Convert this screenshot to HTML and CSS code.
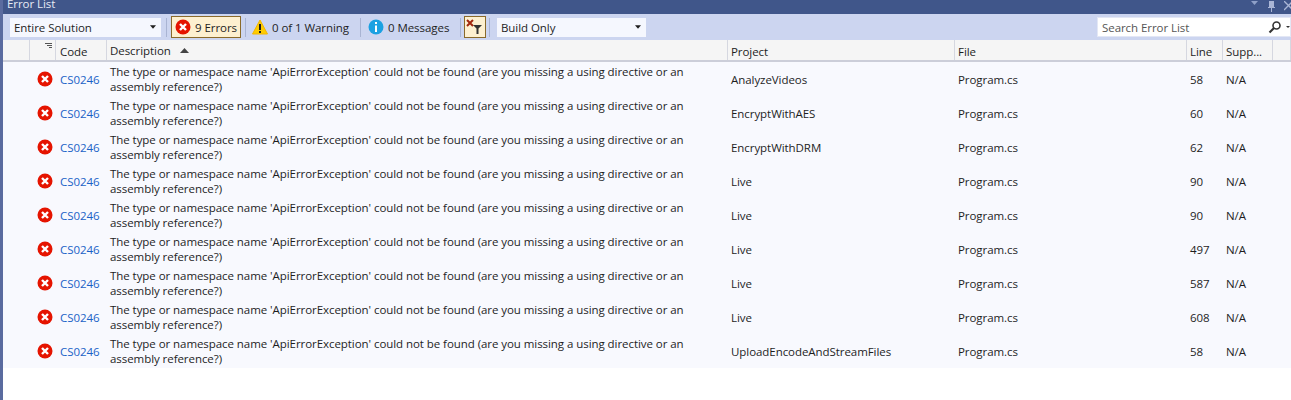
FILE: index.html
```html
<!DOCTYPE html>
<html lang="en">
<head>
<meta charset="utf-8">
<title>Error List</title>
<link rel="stylesheet" href="styles.css">
</head>
<body>
<svg class="defs" width="0" height="0" aria-hidden="true">
  <symbol id="err" viewBox="0 0 16 16">
    <circle cx="8" cy="8" r="7.5" fill="#e51400"/>
    <path d="M5 5l6 6M11 5l-6 6" stroke="#fff" stroke-width="2.4" fill="none"/>
  </symbol>
  <symbol id="caret" viewBox="0 0 7 4"><path d="M0 0h7L3.5 4z" fill="#1e1e1e"/></symbol>
</svg>
<div class="window">
  <header class="title">
    <span class="title-text">Error List</span>
    <div class="title-icons">
      <svg width="9" height="6" viewBox="0 0 9 6"><path d="M1 0h7L4.500 4z" fill="#8fa0c8"/></svg>
      <svg width="7" height="12" viewBox="0 0 7 12"><path d="M1 0h5v6h1v1H4v4H3V7H0V6h1z" fill="#aab6d6"/></svg>
      <svg width="7" height="10" viewBox="0 0 7 10"><path d="M0 0l9 9M9 0L0 9" stroke="#aab6d6" stroke-width="1.300"/></svg>
    </div>
  </header>
  <div class="toolbar">
    <div class="combo combo-scope"><span>Entire Solution</span><svg class="caret" width="6" height="4"><use href="#caret"/></svg></div>
    <i class="sep"></i>
    <div class="tb-btn checked btn-errors"><svg width="16" height="16"><use href="#err"/></svg><span>9 Errors</span></div>
    <i class="sep"></i>
    <div class="tb-btn btn-warn"><svg width="16" height="16" viewBox="0 0 16 16"><path d="M8 1L15.500 15H.5z" fill="#fc0" stroke="#f2b600"/><path d="M7 5h2v6H7zM7 12h2v2H7z" fill="#1e1e1e"/></svg><span>0 of 1 Warning</span></div>
    <i class="sep"></i>
    <div class="tb-btn btn-info"><svg width="16" height="16" viewBox="0 0 16 16"><circle cx="8" cy="8" r="7.500" fill="#1ba1e2"/><path d="M7 3h2v2H7zM7 6.500h2V13H7z" fill="#fff"/></svg><span>0 Messages</span></div>
    <i class="sep"></i>
    <div class="tb-btn checked btn-filter"><svg width="18" height="16" viewBox="0 0 18 16"><path d="M1 1l6 6M7 1L1 7" stroke="#a1260d" stroke-width="2"/><path d="M7 6h9l-3.500 3.500V15h-2V9.500z" fill="#333"/></svg></div>
    <i class="sep"></i>
    <div class="combo combo-build"><span>Build Only</span><svg class="caret" width="6" height="4"><use href="#caret"/></svg></div>
    <div class="search"><span>Search Error List</span>
      <svg width="22" height="13" viewBox="0 0 22 13"><circle cx="8.500" cy="4.500" r="3.500" fill="none" stroke="#333" stroke-width="1.600"/><path d="M6 7L1.500 11.500" stroke="#333" stroke-width="2.200"/><path d="M18 5h4l-2 2z" fill="#333"/></svg>
    </div>
  </div>
  <div class="grid head">
    <div class="hc"></div>
    <div class="hc corner"><svg width="7" height="6" viewBox="0 0 7 6"><path d="M0 .5h7M2 2.500h5M4 4.500h3" stroke="#555" fill="none"/></svg></div>
    <div class="hc hc-code">Code</div>
    <div class="hc hc-desc">Description<svg class="sort" width="9" height="5" viewBox="0 0 9 5"><path d="M0 5h9L4.500 0z" fill="#444"/></svg></div>
    <div class="hc">Project</div>
    <div class="hc">File</div>
    <div class="hc">Line</div>
    <div class="hc">Supp...</div>
    <div class="hc"></div>
  </div>
  <div class="rows">
    <div class="grid row"><div class="c"></div><div class="c ic"><svg width="16" height="16"><use href="#err"/></svg></div><div class="c code">CS0246</div><div class="c desc">The type or namespace name 'ApiErrorException' could not be found (are you missing a using directive or an assembly reference?)</div><div class="c">AnalyzeVideos</div><div class="c">Program.cs</div><div class="c">58</div><div class="c">N/A</div></div>
    <div class="grid row"><div class="c"></div><div class="c ic"><svg width="16" height="16"><use href="#err"/></svg></div><div class="c code">CS0246</div><div class="c desc">The type or namespace name 'ApiErrorException' could not be found (are you missing a using directive or an assembly reference?)</div><div class="c">EncryptWithAES</div><div class="c">Program.cs</div><div class="c">60</div><div class="c">N/A</div></div>
    <div class="grid row"><div class="c"></div><div class="c ic"><svg width="16" height="16"><use href="#err"/></svg></div><div class="c code">CS0246</div><div class="c desc">The type or namespace name 'ApiErrorException' could not be found (are you missing a using directive or an assembly reference?)</div><div class="c">EncryptWithDRM</div><div class="c">Program.cs</div><div class="c">62</div><div class="c">N/A</div></div>
    <div class="grid row"><div class="c"></div><div class="c ic"><svg width="16" height="16"><use href="#err"/></svg></div><div class="c code">CS0246</div><div class="c desc">The type or namespace name 'ApiErrorException' could not be found (are you missing a using directive or an assembly reference?)</div><div class="c">Live</div><div class="c">Program.cs</div><div class="c">90</div><div class="c">N/A</div></div>
    <div class="grid row"><div class="c"></div><div class="c ic"><svg width="16" height="16"><use href="#err"/></svg></div><div class="c code">CS0246</div><div class="c desc">The type or namespace name 'ApiErrorException' could not be found (are you missing a using directive or an assembly reference?)</div><div class="c">Live</div><div class="c">Program.cs</div><div class="c">90</div><div class="c">N/A</div></div>
    <div class="grid row"><div class="c"></div><div class="c ic"><svg width="16" height="16"><use href="#err"/></svg></div><div class="c code">CS0246</div><div class="c desc">The type or namespace name 'ApiErrorException' could not be found (are you missing a using directive or an assembly reference?)</div><div class="c">Live</div><div class="c">Program.cs</div><div class="c">497</div><div class="c">N/A</div></div>
    <div class="grid row"><div class="c"></div><div class="c ic"><svg width="16" height="16"><use href="#err"/></svg></div><div class="c code">CS0246</div><div class="c desc">The type or namespace name 'ApiErrorException' could not be found (are you missing a using directive or an assembly reference?)</div><div class="c">Live</div><div class="c">Program.cs</div><div class="c">587</div><div class="c">N/A</div></div>
    <div class="grid row"><div class="c"></div><div class="c ic"><svg width="16" height="16"><use href="#err"/></svg></div><div class="c code">CS0246</div><div class="c desc">The type or namespace name 'ApiErrorException' could not be found (are you missing a using directive or an assembly reference?)</div><div class="c">Live</div><div class="c">Program.cs</div><div class="c">608</div><div class="c">N/A</div></div>
    <div class="grid row"><div class="c"></div><div class="c ic"><svg width="16" height="16"><use href="#err"/></svg></div><div class="c code">CS0246</div><div class="c desc">The type or namespace name 'ApiErrorException' could not be found (are you missing a using directive or an assembly reference?)</div><div class="c">UploadEncodeAndStreamFiles</div><div class="c">Program.cs</div><div class="c">58</div><div class="c">N/A</div></div>
  </div>
</div>
</body>
</html>
```

FILE: styles.css
```css
* { box-sizing: border-box; }
html, body { margin: 0; height: 100%; background: #fff; overflow: hidden; }
body { font: 11.5px/15px "Open Sans", "Noto Sans", sans-serif; letter-spacing: -0.06px; color: #1e1e1e; }
.defs { display: block; height: 0; }
.window { height: 400px; border-left: 3px solid #5a6b9f; }

.title { height: 14px; background: #40568a; color: #e6eaf5; display: flex; justify-content: space-between; overflow: hidden; padding-left: 4px; }
.title-text { margin-top: -4px; line-height: 16px; }
.title-icons { display: flex; gap: 9px; align-items: flex-start; margin-top: 1px; }

.toolbar { height: 26px; background: #ccd5f0; display: flex; align-items: center; padding-left: 7px; }
.combo { height: 19px; background: #f5f7fe; display: flex; align-items: center; justify-content: space-between; padding: 0 5px 0 4px; }
.combo-scope { width: 151px; margin-right: 5px; }
.combo-build { width: 149px; margin-left: 7px; }
.sep { width: 1px; height: 19px; background: #a9b4d3; flex: none; }
.tb-btn { height: 22px; display: flex; align-items: center; gap: 4px; white-space: nowrap; flex: none; }
.checked { background: #fdf0d0; border: 1px solid #8a6a2a; }
.btn-errors { width: 70px; margin: 0 4px; padding-left: 3px; }
.btn-warn { width: 114px; padding-left: 6px; }
.btn-info { width: 99px; padding-left: 7px; }
.btn-filter { width: 22px; margin: 0 3px; padding-left: 1px; }
.search { margin-left: auto; width: 194px; height: 20px; background: #fff; border: 1px solid #e3e7f5; display: flex; align-items: center; justify-content: space-between; padding-left: 4px; color: #555; }

.grid { display: grid; grid-template-columns: 27px 26px 51px 621px 227px 232px 36px 50px 1fr; }
.head { height: 22px; background: #f5f5f5; border-bottom: 2px solid #ccced9; }
.hc { border-right: 1px solid #d5d7e0; padding: 4px 3px 0; white-space: nowrap; }
.hc-code { padding-left: 4px; }
.hc-desc { padding-top: 3px; }
.corner { display: flex; justify-content: flex-end; padding: 3px 3px 0 0; align-items: flex-start; }
.sort { margin-left: 9px; vertical-align: 2px; }

.rows { background: #f8f9fe; }
.row { height: 34px; align-items: center; grid-template-columns: 27px 26px 51px 621px 227px 232px 36px 50px; }
.c { padding-left: 3px; }
.ic { display: flex; padding-left: 7px; }
.code { color: #1a62c7; padding-left: 4px; }
.desc { width: 600px; }
```
